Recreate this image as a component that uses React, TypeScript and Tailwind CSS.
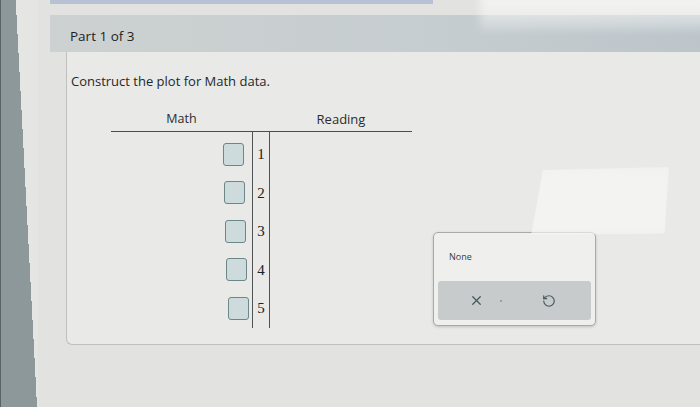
import { RotateCcw, X } from "lucide-react";

const rows = [
  { n: 1, shift: "mr-[8px]" },
  { n: 2, shift: "mr-[7px]" },
  { n: 3, shift: "mr-[6px]" },
  { n: 4, shift: "mr-[5px]" },
  { n: 5, shift: "mr-[3px]" },
];

function StemPlot() {
  return (
    <div className="ml-[40px] mt-[20px] w-[301px]">
      {/* column titles */}
      <div className="grid grid-cols-[141px_18px_142px] border-b-[1.5px] border-[#4b4d4e] pb-[3px] text-[13px] leading-[18px] text-[#2a2d2f]">
        <div className="text-center text-[12.5px]">Math</div>
        <div />
        <div className="text-center">Reading</div>
      </div>

      {/* stems and leaves */}
      <div className="flex">
        <div className="w-[141px] pt-[3px]">
          {rows.map((r) => (
            <div key={r.n} className="flex h-[38.5px] items-center justify-end">
              <div className={`h-[23px] w-[21px] rounded-[3px] border-[1.5px] border-[#6c8689] bg-[#cddbdc] ${r.shift}`} />
            </div>
          ))}
        </div>
        <div className="w-[18px] border-x border-[#505354] pt-[3px] font-['Liberation_Serif',serif] text-[15px] text-[#202020]">
          {rows.map((r) => (
            <div key={r.n} className="flex h-[38.5px] items-center justify-center">
              {r.n}
            </div>
          ))}
        </div>
        <div className="w-[142px]" />
      </div>
    </div>
  );
}

function Palette() {
  return (
    <div className="ml-[21px] mt-[160px] flex h-[94px] w-[163px] flex-col rounded-[5px] border border-[#a8aaa9] bg-[#efefee] shadow-[0_1px_3px_rgba(0,0,0,0.18)]">
      <div className="h-[48px] pl-[15px] pt-[18px] text-[9px] leading-[12px] text-[#3a3d3f]">None</div>
      <div className="mx-[4px] flex h-[39px] items-center rounded-[3px] bg-[#c8cbcb] pl-[31px]">
        <X size={15} strokeWidth={2} className="text-[#43595b]" />
        <div className="ml-[16px] h-[2px] w-[2px] rounded-full bg-[#8d9494]" />
        <RotateCcw size={14} strokeWidth={2} className="ml-[40px] text-[#43595b]" />
      </div>
    </div>
  );
}

export default function App() {
  return (
    <div className="relative flex h-[407px] w-[700px] overflow-hidden bg-[#e2e2e0] font-['Open_Sans',sans-serif]">
      {/* monitor bezel on the left */}
      <div className="h-full w-[38px] shrink-0 border-l border-[#56646a] bg-[linear-gradient(87deg,#8d989b_36px,#e5e5e3_36px)]" />

      <div className="flex flex-1 flex-col pl-[12px]">
        <div className="h-[4px] w-[383px] bg-[#b7c3d5]" />

        <div className="mt-[11px] flex h-[37px] items-center bg-[linear-gradient(90deg,#cdd1d1,#c6cdd0_60%,#bcc5ca)] pl-[20px] pt-[5px] text-[13.5px] text-[#1e2225]">
          Part 1 of 3
        </div>

        <div className="ml-[16px] flex h-[293px] rounded-bl-[6px] border-b border-l border-[#bfc0be] bg-[#e9e9e7] pl-[4px] pt-[20px]">
          <div className="flex flex-col">
            <div className="text-[13px] leading-[18px] text-[#24282a]">Construct the plot for Math data.</div>
            <StemPlot />
          </div>
          <Palette />
        </div>
      </div>

      {/* glare from the photo */}
      <div className="pointer-events-none absolute left-[480px] top-[-6px] h-[36px] w-[230px] bg-[linear-gradient(180deg,rgba(248,248,248,0.9),rgba(240,242,243,0.25))] blur-[5px]" />
      <div className="pointer-events-none absolute left-[525px] top-[164px] h-[74px] w-[150px] bg-[#f6f6f5]/70 blur-[4px] [clip-path:polygon(12%_8%,96%_4%,93%_94%,4%_96%)]" />
    </div>
  );
}
